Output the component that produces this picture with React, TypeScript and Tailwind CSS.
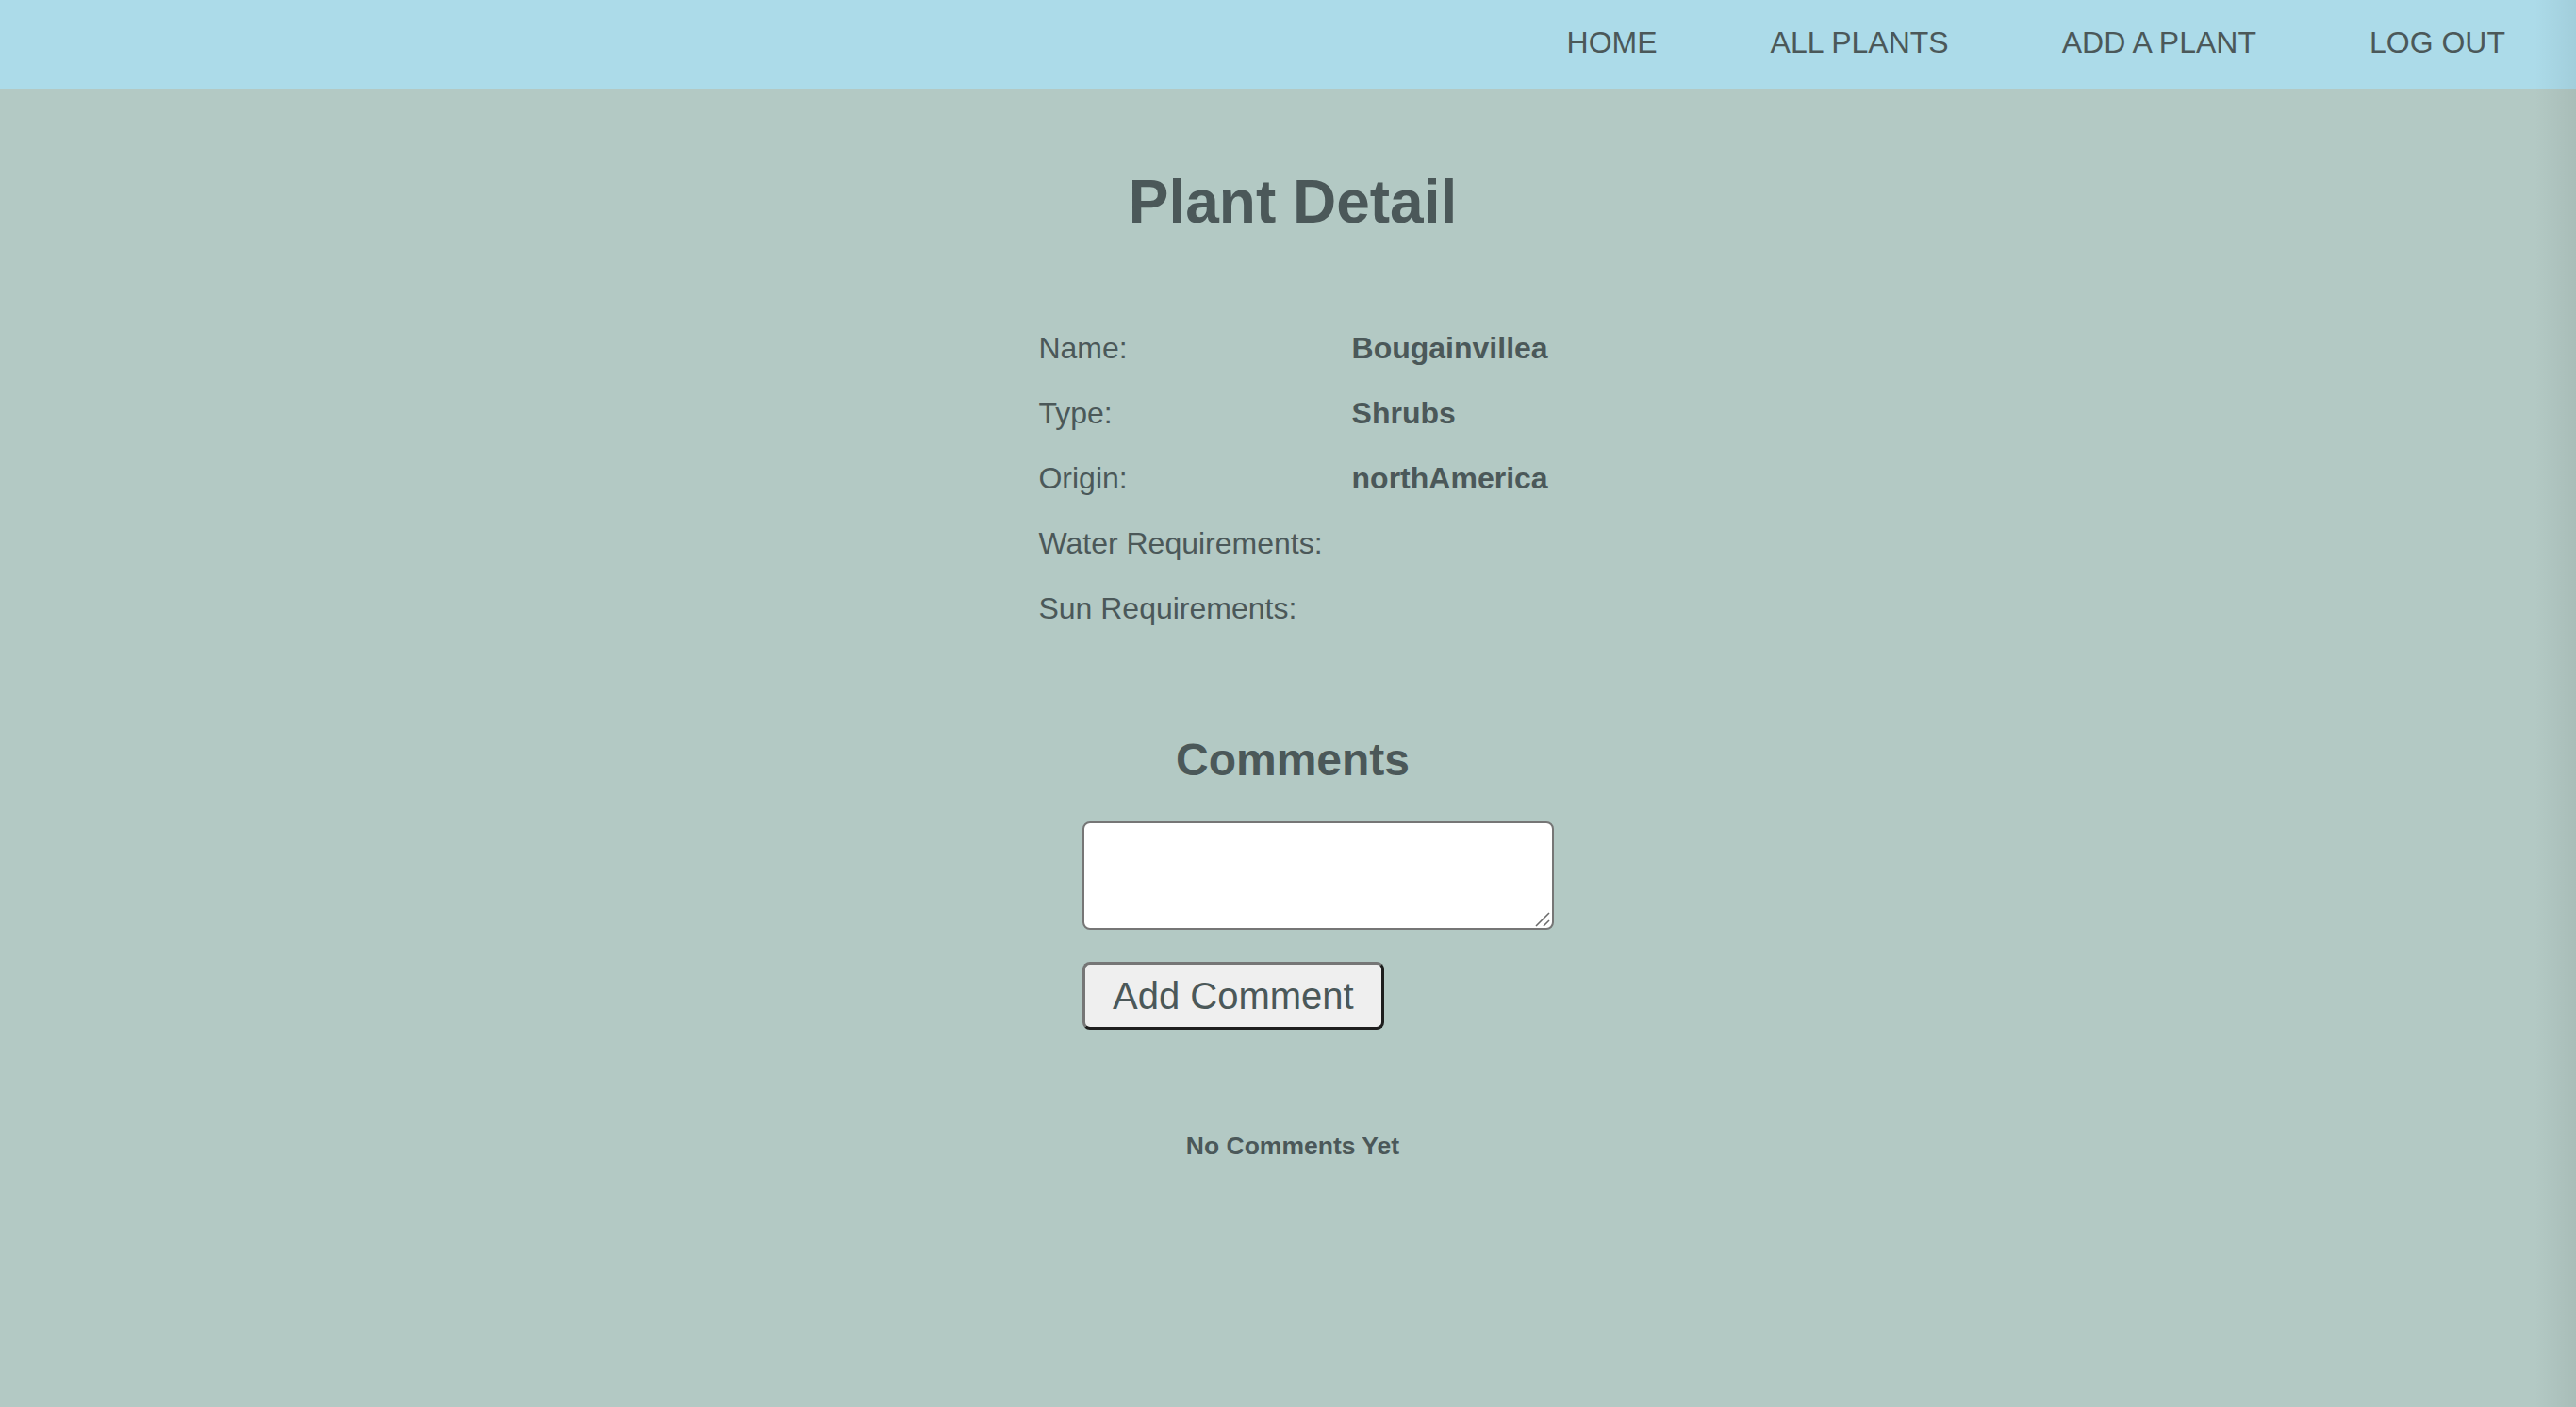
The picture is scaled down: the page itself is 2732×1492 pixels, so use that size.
const NAV_LINKS = ["HOME", "ALL PLANTS", "ADD A PLANT", "LOG OUT"];

const DETAILS: [string, string][] = [
  ["Name:", "Bougainvillea"],
  ["Type:", "Shrubs"],
  ["Origin:", "northAmerica"],
  ["Water Requirements:", ""],
  ["Sun Requirements:", ""],
];

export default function App() {
  return (
    <div
      className="relative min-h-screen bg-[#b3c9c4] text-[#4b5859]"
      style={{ fontFamily: '"Liberation Sans", Arial, Helvetica, sans-serif' }}
    >
      {/* Nav */}
      <nav className="flex h-[94px] items-start justify-end gap-[120px] bg-[#acdbe9] pr-[75px] pt-[29px]">
        {NAV_LINKS.map((l) => (
          <a key={l} href="#" className="text-[32px] leading-[32px] text-[#4b5859]">
            {l}
          </a>
        ))}
      </nav>

      <main className="flex flex-col items-center pl-[10px]">
        <h1 className="mt-[88px] text-[64px] font-bold leading-[64px]">Plant Detail</h1>

        {/* Details */}
        <div className="mt-[89px] grid grid-cols-[auto_auto] gap-x-[31px]">
          {DETAILS.map(([label, value]) => (
            <div key={label} className="contents">
              <span className="text-[32px] leading-[69px]">{label}</span>
              <span className="w-[207px] text-[32px] font-bold leading-[69px]">{value}</span>
            </div>
          ))}
        </div>

        {/* Comments */}
        <h2 className="mt-[102px] text-[48px] font-bold leading-[48px]">Comments</h2>

        <form className="mt-[41px] flex w-[446px] flex-col items-start" onSubmit={(e) => e.preventDefault()}>
          <div className="relative h-[115px] w-[500px] min-w-[500px]">
            <textarea className="h-full w-full resize-none rounded-[8px] border-2 border-[#767676] bg-white" />
            <svg
              className="pointer-events-none absolute bottom-[3px] right-[4px] h-[16px] w-[16px]"
              viewBox="0 0 16 16"
              fill="none"
              stroke="#6b6b6b"
              strokeWidth="1.6"
            >
              <path d="M1 15 L15 1" />
              <path d="M9 15 L15 9" />
            </svg>
          </div>
          <button
            type="submit"
            className="mt-[34px] rounded-[8px] border-[3px] border-b-[#1e1e1e] border-l-[#767676] border-r-[#1e1e1e] border-t-[#767676] bg-[#efefef] px-[29px] text-[40px] leading-[66px] text-[#4b5859]"
          >
            Add Comment
          </button>
        </form>

        <h5 className="mt-[110px] text-[26.5px] font-bold leading-[26.5px]">No Comments Yet</h5>
      </main>

      {/* window edge shade */}
      <div className="pointer-events-none absolute inset-y-0 right-0 w-[44px] bg-gradient-to-r from-transparent to-black/[0.06]" />
    </div>
  );
}
